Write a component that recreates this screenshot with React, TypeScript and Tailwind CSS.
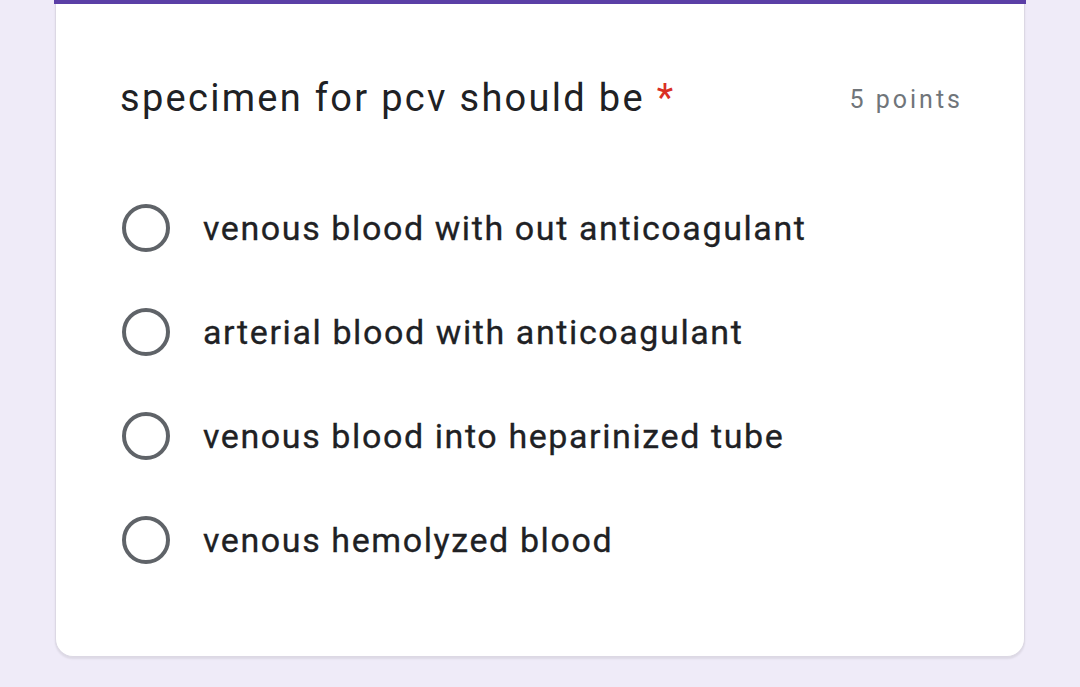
export default function App() {
  const options = [
    "venous blood with out anticoagulant",
    "arterial blood with anticoagulant",
    "venous blood into heparinized tube",
    "venous hemolyzed blood",
  ];
  return (
    <div className="w-[1080px] h-[687px] bg-[#efebf8] overflow-hidden relative" style={{ fontFamily: "Roboto, 'Liberation Sans', sans-serif" }}>
      <div className="ml-[55px] w-[970px] h-[657px] bg-white rounded-b-[18px] border border-t-0 border-[#dcd8e4] shadow-[0_2px_2px_rgba(0,0,0,0.08)] relative">
        <div className="absolute -left-[2px] -right-[2px] top-0 h-[4px] bg-[#5b3fa6]" />
        <div className="flex items-start justify-between pl-[64px] pr-[64px] pt-[72px]">
          <div className="text-[38px] leading-[52px] text-[#202124] tracking-[2.3px]">
            specimen for pcv should be <span className="text-[#d93025]">*</span>
          </div>
          <div className="text-[25px] leading-[40px] text-[#70757a] pt-[8px] tracking-[3px] -mr-[3px]">5 points</div>
        </div>
        <div className="flex flex-col gap-[56px] pl-[66px] pt-[80px]">
          {options.map((o) => (
            <div key={o} className="flex items-center gap-[33px] h-[48px]">
              <div className="w-[48px] h-[48px] rounded-full border-[4px] border-[#5f6368] shrink-0" />
              <div className="text-[34px] text-[#202124] leading-[48px] tracking-[1.6px] [-webkit-text-stroke:0.3px_#202124]">{o}</div>
            </div>
          ))}
        </div>
      </div>
    </div>
  );
}
